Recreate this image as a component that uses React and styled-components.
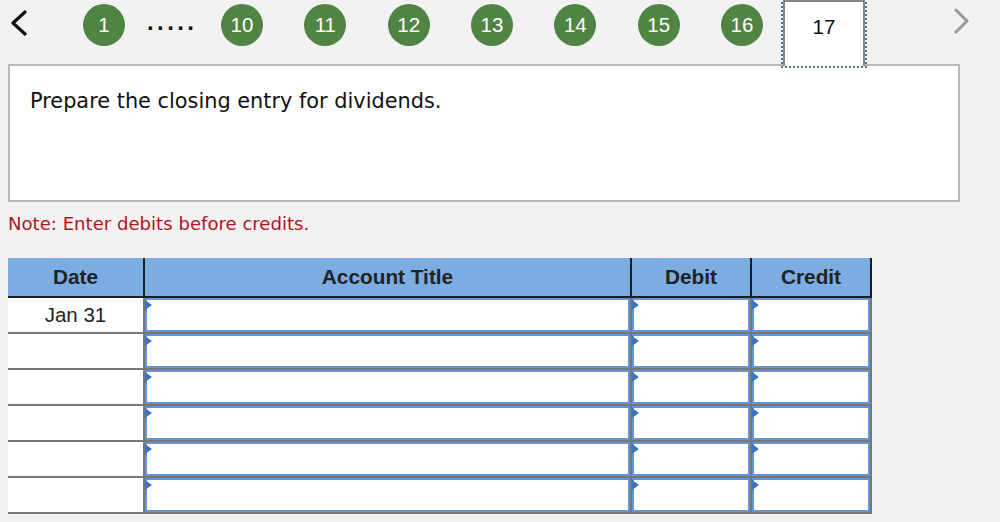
import React from "react"
import styled, { createGlobalStyle } from "styled-components"

const GlobalStyle = createGlobalStyle`
  html, body {
    margin: 0;
    padding: 0;
    background: #f2f2f2;
  }
  body {
    font-family: "Liberation Sans", Arial, sans-serif;
    color: #222;
  }
`

const Page = styled.div`
  width: 1000px;
  height: 522px;
  overflow: hidden;
`

const Nav = styled.nav`
  display: flex;
  align-items: flex-start;
  height: 64px;
`

const Arrow = styled.svg`
  flex: none;
  margin: ${(p) => p.$margin};
`

const Step = styled.div`
  flex: none;
  width: 42px;
  height: 42px;
  margin-top: 4px;
  margin-left: ${(p) => p.$gap}px;
  border-radius: 50%;
  background: #4f8444;
  color: #fff;
  font-size: 20.5px;
  line-height: 42px;
  text-align: center;
`

const Dots = styled.div`
  flex: none;
  width: 52px;
  margin-left: 22px;
  margin-top: 7px;
  font-size: 24px;
  font-weight: bold;
  letter-spacing: 3.4px;
  color: #111;
  line-height: 30px;
`

const Current = styled.div`
  position: relative;
  z-index: 1;
  flex: none;
  box-sizing: border-box;
  width: 82px;
  height: 66px;
  margin-left: 20px;
  background: #fff;
  border: 2px solid #858585;
  border-bottom: none;
  outline: 2px dotted #3f78c0;
  color: #111;
  font-size: 20.5px;
  line-height: 50px;
  text-align: center;
`

const Question = styled.div`
  box-sizing: border-box;
  width: 952px;
  height: 138px;
  margin-left: 8px;
  padding: 23px 20px 0;
  background: #fff;
  border: 2px solid #b8b8b8;
  font-family: "DejaVu Sans", Verdana, sans-serif;
  font-size: 20.85px;
  line-height: 24px;
  color: #111;
`

const Note = styled.p`
  margin: 11px 0 0 8px;
  font-family: "DejaVu Sans", Verdana, sans-serif;
  font-size: 18.1px;
  line-height: 22px;
  color: #b3141e;
`

const Journal = styled.div`
  display: grid;
  grid-template-columns: 137px 487px 120px 120px;
  width: 864px;
  margin: 23px 0 0 8px;
`

const HeadCell = styled.div`
  box-sizing: border-box;
  height: 40px;
  background: #7badE2;
  border-right: 2px solid #1e1e1e;
  border-bottom: 2px solid #1e1e1e;
  font-size: 20.8px;
  font-weight: bold;
  line-height: 38px;
  text-align: center;
  color: #222;
`

const Cell = styled.div`
  position: relative;
  box-sizing: border-box;
  height: 36px;
  background: #fff;
  border-right: 2px solid #777;
  border-bottom: 2px solid #777;
  font-size: 20.5px;
  line-height: 34px;
  text-align: center;
  color: #222;

  ${(p) =>
    p.$entry &&
    `
    &::before {
      content: "";
      position: absolute;
      top: 2px;
      left: 0;
      border-left: 7px solid #3b74c0;
      border-top: 5.5px solid transparent;
      border-bottom: 5.5px solid transparent;
    }
  `}
`

const Entry = styled.input`
  display: block;
  box-sizing: border-box;
  width: 100%;
  height: 34px;
  margin: 0;
  padding: 0 6px;
  border: 2px solid #6494d3;
  border-radius: 0;
  background: #fff;
  font-family: "Liberation Sans", Arial, sans-serif;
  font-size: 18px;
  outline: none;
`

const steps = [10, 11, 12, 13, 14, 15, 16]
const rows = ["Jan 31", "", "", "", "", ""]

export default function App() {
  return (
    <Page>
      <GlobalStyle />
      <Nav>
        <Arrow width="18" height="26" viewBox="0 0 18 26" $margin="10px 0 0 10px">
          <polyline
            points="15,2 3,13 15,24"
            fill="none"
            stroke="#111"
            strokeWidth="3.2"
            strokeLinecap="round"
            strokeLinejoin="round"
          />
        </Arrow>
        <Step $gap={55}>1</Step>
        <Dots>.....</Dots>
        {steps.map((n, i) => (
          <Step key={n} $gap={i === 0 ? 22 : 41.33}>
            {n}
          </Step>
        ))}
        <Current>17</Current>
        <Arrow width="16" height="26" viewBox="0 0 16 26" $margin="8px 0 0 89px">
          <polyline
            points="2,2 13,13 2,24"
            fill="none"
            stroke="#9a9a9a"
            strokeWidth="3"
            strokeLinecap="round"
            strokeLinejoin="round"
          />
        </Arrow>
      </Nav>
      <Question>Prepare the closing entry for dividends.</Question>
      <Note>Note: Enter debits before credits.</Note>
      <Journal>
        <HeadCell>Date</HeadCell>
        <HeadCell>Account Title</HeadCell>
        <HeadCell>Debit</HeadCell>
        <HeadCell>Credit</HeadCell>
        {rows.map((date, i) => (
          <React.Fragment key={i}>
            <Cell>{date}</Cell>
            <Cell $entry>
              <Entry type="text" aria-label="Account Title" />
            </Cell>
            <Cell $entry>
              <Entry type="text" aria-label="Debit" />
            </Cell>
            <Cell $entry>
              <Entry type="text" aria-label="Credit" />
            </Cell>
          </React.Fragment>
        ))}
      </Journal>
    </Page>
  )
}
